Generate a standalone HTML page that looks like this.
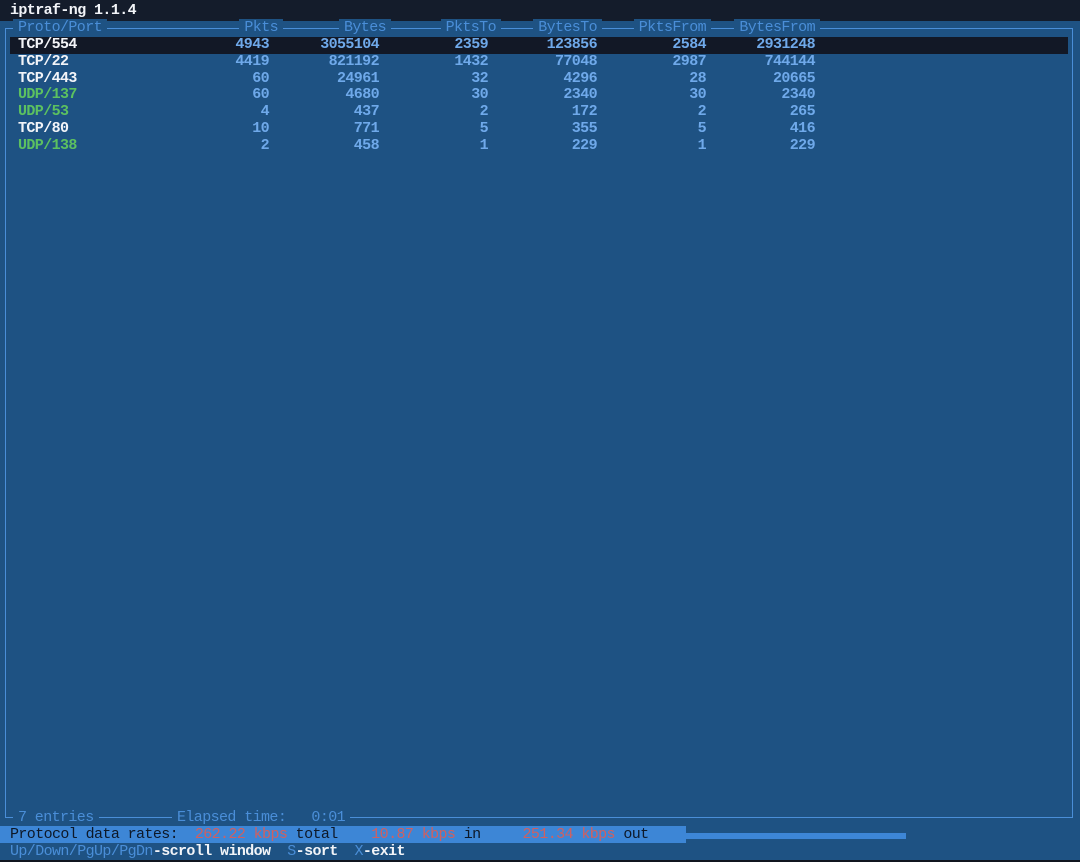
<!DOCTYPE html><html><head><style>
body{margin:0;width:1080px;height:862px;background:#1e5283;position:relative;overflow:hidden;font-family:"Liberation Mono",monospace;font-size:15px;letter-spacing:-0.6px;font-weight:bold;}
.a{position:absolute;white-space:pre;line-height:17px;}
.r{text-align:right;}
.h{color:#4a8ed8;font-weight:normal;}
.n{color:#6fa9ea;}
.w{color:#f2f4f8;}
.g{color:#5cc160;}
.ln{position:absolute;height:1px;background:#4a8ed8;}
.vl{position:absolute;width:1px;background:#4a8ed8;}
.lb{background:#1e5283;padding:0 5px;}
</style></head><body>
<div style="position:absolute;left:0;top:0;width:1080px;height:21px;background:#141c2b"></div>
<div class="a w" style="left:10px;top:2px">iptraf-ng 1.1.4</div>
<div class="ln" style="left:5px;top:28px;width:1068px"></div>
<div class="ln" style="left:5px;top:817px;width:1068px"></div>
<div class="vl" style="left:5px;top:28px;height:790px"></div>
<div class="vl" style="left:1072px;top:28px;height:790px"></div>
<div style="position:absolute;left:10px;top:37px;width:1058px;height:17px;background:#121826"></div>
<div class="a h lb" style="left:13px;top:19px">Proto/Port</div>
<div class="a h r" style="left:183px;width:100px;top:19px"><span class="lb">Pkts</span></div>
<div class="a h r" style="left:291px;width:100px;top:19px"><span class="lb">Bytes</span></div>
<div class="a h r" style="left:401px;width:100px;top:19px"><span class="lb">PktsTo</span></div>
<div class="a h r" style="left:502px;width:100px;top:19px"><span class="lb">BytesTo</span></div>
<div class="a h r" style="left:611px;width:100px;top:19px"><span class="lb">PktsFrom</span></div>
<div class="a h r" style="left:720px;width:100px;top:19px"><span class="lb">BytesFrom</span></div>
<div id="rows"></div>
<div class="a h lb" style="left:13px;top:809px">7 entries</div>
<div class="a h lb" style="left:172px;top:809px">Elapsed time:   0:01</div>
<div style="position:absolute;left:0;top:826px;width:686px;height:17px;background:#3d86d6"></div>
<div style="position:absolute;left:686px;top:833px;width:220px;height:6px;background:#3d86d6"></div>
<div class="a" style="left:10px;top:826px;color:#0d1828;font-weight:normal">Protocol data rates:  <span style="color:#d06060">262.22 kbps</span> total    <span style="color:#d06060">10.87 kbps</span> in     <span style="color:#d06060">251.34 kbps</span> out</div>
<div class="a" style="left:10px;top:843px;color:#f2f4f8"><span class="h">Up/Down/PgUp/PgDn</span>-scroll window  <span class="h">S</span>-sort  <span class="h">X</span>-exit</div>
<div style="position:absolute;left:0;top:860px;width:1080px;height:2px;background:#10151f"></div>
<script>
var d=[["TCP/554","w","4943","3055104","2359","123856","2584","2931248"],
["TCP/22","w","4419","821192","1432","77048","2987","744144"],
["TCP/443","w","60","24961","32","4296","28","20665"],
["UDP/137","g","60","4680","30","2340","30","2340"],
["UDP/53","g","4","437","2","172","2","265"],
["TCP/80","w","10","771","5","355","5","416"],
["UDP/138","g","2","458","1","229","1","229"]];
var R=[269,379,488,597,706,815],h="";
d.forEach(function(r,i){var t=36+i*16.8;
h+='<div class="a '+r[1]+'" style="left:18px;top:'+t+'px">'+r[0]+'</div>';
for(var j=0;j<6;j++)h+='<div class="a n r" style="left:'+(R[j]-100)+'px;width:100px;top:'+t+'px">'+r[2+j]+'</div>';});
document.getElementById("rows").innerHTML=h;
</script>
</body></html>
